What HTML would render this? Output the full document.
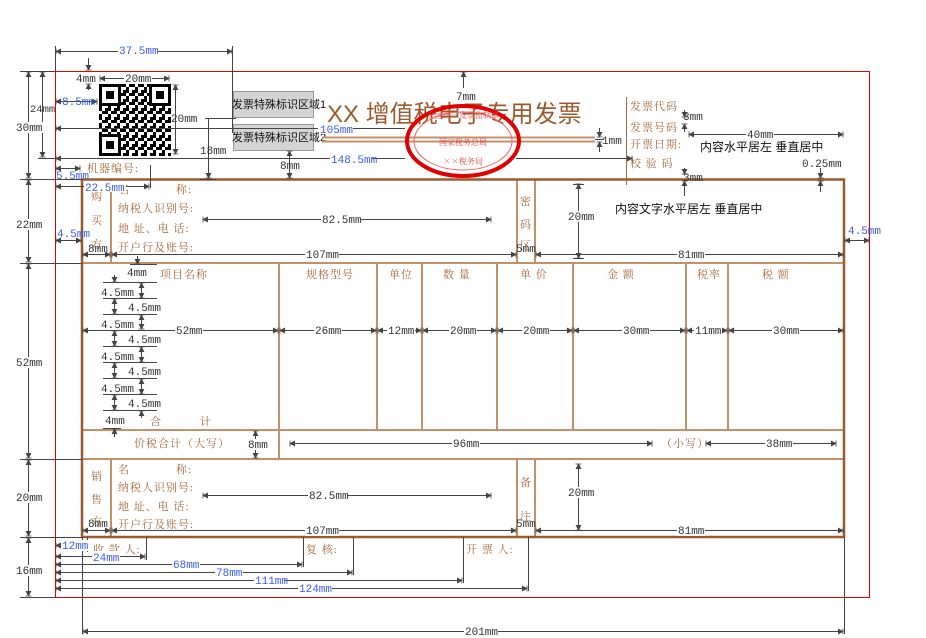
<!DOCTYPE html>
<html><head><meta charset="utf-8">
<style>
html,body{margin:0;padding:0;background:#fff;}
svg{display:block;}
.d{font-family:"Liberation Mono","DejaVu Sans Mono",monospace;font-size:11px;fill:#333;}
.b{font-family:"Liberation Mono","DejaVu Sans Mono",monospace;font-size:11px;fill:#3a5bf0;}
.z{font-family:"Liberation Serif","Noto Serif CJK SC",serif;font-size:11px;fill:#a8693c;letter-spacing:1px;}
.k{font-family:"Liberation Sans","Noto Sans CJK SC",sans-serif;font-size:11px;fill:#111;}
.dl line,.dl path{stroke:#444;stroke-width:1;fill:none;}
</style></head>
<body>
<svg width="926" height="638" viewBox="0 0 926 638" xmlns="http://www.w3.org/2000/svg">
<defs>
<marker id="a" markerWidth="6" markerHeight="6" refX="5" refY="3" orient="auto-start-reverse" markerUnits="userSpaceOnUse"><path d="M0,0.5 L5,3 L0,5.5 Z M5,0 L5,6" fill="#444" stroke="#444" stroke-width="0.8"/></marker>
<pattern id="qr" width="9" height="9" patternUnits="userSpaceOnUse">
<rect x="0" y="0" width="3" height="3" fill="#000"/><rect x="6" y="0" width="3" height="3" fill="#000"/><rect x="3" y="3" width="3" height="3" fill="#000"/><rect x="0" y="6" width="3" height="3" fill="#000"/><rect x="6" y="3" width="3" height="3" fill="#000"/>
</pattern>
</defs>

<!-- QR -->
<rect x="99" y="84" width="72" height="72" fill="url(#qr)"/>
<g fill="#fff"><rect x="99" y="84" width="22" height="22"/><rect x="149" y="84" width="22" height="22"/><rect x="99" y="134" width="22" height="22"/></g>
<g fill="none" stroke="#000" stroke-width="3"><rect x="100.5" y="85.5" width="19" height="19"/><rect x="150.5" y="85.5" width="19" height="19"/><rect x="100.5" y="135.5" width="19" height="19"/></g>
<g fill="#000"><rect x="106" y="91" width="8" height="8"/><rect x="156" y="91" width="8" height="8"/><rect x="106" y="141" width="8" height="8"/></g>

<!-- grey boxes -->
<rect x="233.5" y="91.5" width="80" height="26" fill="#d4d4d4" stroke="#999"/>
<rect x="233.5" y="124.5" width="80" height="26" fill="#d4d4d4" stroke="#999"/>
<text class="k" x="232" y="108">发票特殊标识区域1</text>
<text class="k" x="232" y="141">发票特殊标识区域2</text>

<!-- title -->
<text x="327" y="122" style="font-family:'Liberation Sans','Noto Sans CJK SC',sans-serif;font-size:24px;fill:#9b5a2e;">XX 增值税电子专用发票</text>
<line x1="322" y1="137.5" x2="595" y2="137.5" stroke="#c4906a" stroke-width="2"/>
<line x1="322" y1="141.5" x2="595" y2="141.5" stroke="#c4906a" stroke-width="2"/>
<!-- stamp -->
<ellipse cx="463" cy="141" rx="56" ry="35" fill="none" stroke="#e00000" stroke-width="4"/>
<ellipse cx="463" cy="141" rx="49" ry="29" fill="none" stroke="#e66" stroke-width="1"/>
<text x="463" y="118" text-anchor="middle" style="font-family:'Noto Serif CJK SC',serif;font-size:8px;fill:#d44">全国统一发票监制章</text>
<text x="463" y="145" text-anchor="middle" style="font-family:'Noto Serif CJK SC',serif;font-size:8px;fill:#d44">国家税务总局</text>
<text x="463" y="164" text-anchor="middle" style="font-family:'Noto Serif CJK SC',serif;font-size:8px;fill:#d44">××税务局</text>

<!-- right header labels -->
<line x1="626.5" y1="97" x2="626.5" y2="185" stroke="#a8693c"/>
<text class="z" x="630" y="110">发票代码</text>
<text class="z" x="630" y="131">发票号码</text>
<text class="z" x="630" y="148">开票日期:</text>
<text class="z" x="630" y="167">校 验 码</text>
<text class="k" x="700" y="151" style="font-size:12px">内容水平居左 垂直居中</text>

<!-- main box -->
<g fill="none" stroke="#c4906a" stroke-width="2">
<line x1="82" y1="263" x2="844" y2="263"/>
<line x1="82" y1="430" x2="844" y2="430"/>
<line x1="82" y1="459" x2="844" y2="459"/>
<line x1="111" y1="179" x2="111" y2="263"/>
<line x1="111" y1="459" x2="111" y2="537"/>
<line x1="517" y1="179" x2="517" y2="263"/>
<line x1="535" y1="179" x2="535" y2="263"/>
<line x1="517" y1="459" x2="517" y2="537"/>
<line x1="535" y1="459" x2="535" y2="537"/>
<line x1="279" y1="263" x2="279" y2="459"/>
<line x1="377" y1="263" x2="377" y2="430"/>
<line x1="422" y1="263" x2="422" y2="430"/>
<line x1="497" y1="263" x2="497" y2="430"/>
<line x1="573" y1="263" x2="573" y2="430"/>
<line x1="686" y1="263" x2="686" y2="430"/>
<line x1="728" y1="263" x2="728" y2="430"/>
</g>
<rect x="82" y="179.5" width="762" height="357.5" fill="none" stroke="#9b5a2e" stroke-width="2.5"/>

<!-- buyer -->
<g class="z">
<text x="91" y="200">购</text><text x="91" y="224">买</text><text x="91" y="248">方</text>
<text x="118" y="193">名</text><text x="176" y="193">称:</text>
<text x="118" y="212">纳税人识别号:</text>
<text x="118" y="232">地 址、电 话:</text>
<text x="118" y="251">开户行及账号:</text>
<text x="520" y="205">密</text><text x="520" y="228">码</text><text x="520" y="249">区</text>
<text x="91" y="480">销</text><text x="91" y="503">售</text><text x="91" y="525">方</text>
<text x="118" y="473">名</text><text x="176" y="473">称:</text>
<text x="118" y="491">纳税人识别号:</text>
<text x="118" y="510">地 址、电 话:</text>
<text x="118" y="528">开户行及账号:</text>
<text x="520" y="486">备</text><text x="520" y="520">注</text>
<text x="87" y="172">机器编号:</text>
<text x="160" y="278">项目名称</text>
<text x="306" y="278">规格型号</text>
<text x="389" y="278">单位</text>
<text x="443" y="278">数  量</text>
<text x="520" y="278">单  价</text>
<text x="607" y="278">金  额</text>
<text x="697" y="278">税率</text>
<text x="762" y="278">税  额</text>
<text x="150" y="425">合</text><text x="200" y="425">计</text>
<text x="134" y="447">价税合计（大写）</text>
<text x="661" y="447">（小写）</text>
<text x="93" y="553">收 款 人:</text>
<text x="306" y="553">复 核:</text>
<text x="466" y="553">开 票 人:</text>
</g>
<text class="k" x="615" y="213" style="font-size:12px">内容文字水平居左 垂直居中</text>

<!-- dimension lines -->
<g class="dl">
<line x1="20" y1="71.5" x2="55" y2="71.5"/>
<line x1="20" y1="179.5" x2="82" y2="179.5"/>
<line x1="20" y1="263.5" x2="82" y2="263.5"/>
<line x1="20" y1="459.5" x2="82" y2="459.5"/>
<line x1="20" y1="537.5" x2="82" y2="537.5"/>
<line x1="20" y1="597.5" x2="55" y2="597.5"/>
<line x1="38" y1="158.5" x2="55" y2="158.5"/>
<line x1="28.5" y1="72" x2="28.5" y2="178" marker-start="url(#a)" marker-end="url(#a)"/>
<line x1="42.5" y1="72" x2="42.5" y2="157" marker-start="url(#a)" marker-end="url(#a)"/>
<line x1="28.5" y1="180" x2="28.5" y2="262" marker-start="url(#a)" marker-end="url(#a)"/>
<line x1="28.5" y1="264" x2="28.5" y2="458" marker-start="url(#a)" marker-end="url(#a)"/>
<line x1="28.5" y1="460" x2="28.5" y2="536" marker-start="url(#a)" marker-end="url(#a)"/>
<line x1="28.5" y1="538" x2="28.5" y2="596" marker-start="url(#a)" marker-end="url(#a)"/>
<line x1="55.5" y1="46" x2="55.5" y2="71"/>
<line x1="232.5" y1="46" x2="232.5" y2="133"/>
<line x1="56" y1="51.5" x2="232" y2="51.5" marker-start="url(#a)" marker-end="url(#a)"/>
<line x1="88.5" y1="58" x2="88.5" y2="70" marker-end="url(#a)"/>
<line x1="463.5" y1="88" x2="463.5" y2="72" marker-end="url(#a)"/>
<line x1="100" y1="78.5" x2="169" y2="78.5" marker-start="url(#a)" marker-end="url(#a)"/>
<line x1="88.5" y1="90" x2="88.5" y2="84" marker-end="url(#a)"/>
<line x1="56" y1="101.5" x2="97" y2="101.5" marker-start="url(#a)" marker-end="url(#a)"/>
<line x1="175.5" y1="85" x2="175.5" y2="154" marker-start="url(#a)" marker-end="url(#a)"/>
<line x1="56" y1="128.5" x2="318" y2="128.5" marker-start="url(#a)"/>
<line x1="352" y1="128.5" x2="405" y2="128.5"/>
<line x1="205" y1="118.5" x2="236" y2="118.5"/>
<line x1="208.5" y1="119" x2="208.5" y2="178" marker-end="url(#a)"/>
<line x1="200" y1="179.5" x2="216" y2="179.5"/>
<line x1="289.5" y1="151" x2="289.5" y2="178" marker-start="url(#a)" marker-end="url(#a)"/>
<line x1="56" y1="158.5" x2="330" y2="158.5" marker-start="url(#a)"/>
<line x1="372" y1="158.5" x2="405" y2="158.5"/>
<line x1="516" y1="158.5" x2="632" y2="158.5" marker-end="url(#a)"/>
<line x1="599.5" y1="128" x2="599.5" y2="137" marker-end="url(#a)"/>
<line x1="599.5" y1="152" x2="599.5" y2="142" marker-end="url(#a)"/>
<line x1="595" y1="139.5" x2="604" y2="139.5"/>
<line x1="684.5" y1="110" x2="684.5" y2="117" marker-end="url(#a)"/>
<line x1="684.5" y1="132" x2="684.5" y2="124" marker-end="url(#a)"/>
<line x1="684.5" y1="168" x2="684.5" y2="174" marker-end="url(#a)"/>
<line x1="684.5" y1="196" x2="684.5" y2="181" marker-end="url(#a)"/>
<line x1="689" y1="134.5" x2="843" y2="134.5" marker-start="url(#a)" marker-end="url(#a)"/>
<line x1="820.5" y1="168" x2="820.5" y2="178" marker-end="url(#a)"/>
<line x1="820.5" y1="192" x2="820.5" y2="181" marker-end="url(#a)"/>
<line x1="56" y1="168.5" x2="80" y2="168.5" marker-start="url(#a)" marker-end="url(#a)"/>
<line x1="56" y1="186.5" x2="149" y2="186.5" marker-start="url(#a)" marker-end="url(#a)"/>
<line x1="150.5" y1="165" x2="150.5" y2="188"/>
<line x1="56" y1="240.5" x2="81" y2="240.5" marker-start="url(#a)" marker-end="url(#a)"/>
<line x1="845" y1="240.5" x2="869" y2="240.5" marker-start="url(#a)" marker-end="url(#a)"/>
<line x1="203" y1="219.5" x2="491" y2="219.5" marker-start="url(#a)" marker-end="url(#a)"/>
<line x1="83" y1="254.5" x2="110" y2="254.5" marker-start="url(#a)" marker-end="url(#a)"/>
<line x1="112" y1="254.5" x2="516" y2="254.5" marker-start="url(#a)" marker-end="url(#a)"/>
<line x1="536" y1="254.5" x2="843" y2="254.5" marker-start="url(#a)" marker-end="url(#a)"/>
<line x1="578.5" y1="184" x2="578.5" y2="258" marker-start="url(#a)" marker-end="url(#a)"/>
<line x1="573" y1="184.5" x2="584" y2="184.5"/><line x1="573" y1="258.5" x2="584" y2="258.5"/>
<line x1="137.5" y1="256" x2="137.5" y2="264" marker-end="url(#a)"/>
<line x1="130" y1="264.5" x2="157" y2="264.5"/>
<line x1="103" y1="282.5" x2="157" y2="282.5"/><line x1="103" y1="298.5" x2="157" y2="298.5"/>
<line x1="103" y1="314.5" x2="157" y2="314.5"/><line x1="103" y1="346.5" x2="157" y2="346.5"/>
<line x1="103" y1="362.5" x2="157" y2="362.5"/><line x1="103" y1="378.5" x2="157" y2="378.5"/>
<line x1="103" y1="394.5" x2="157" y2="394.5"/><line x1="103" y1="410.5" x2="157" y2="410.5"/>
<line x1="114.5" y1="275" x2="114.5" y2="282" marker-end="url(#a)"/>
<line x1="114.5" y1="299" x2="114.5" y2="314" marker-start="url(#a)" marker-end="url(#a)"/>
<line x1="114.5" y1="331" x2="114.5" y2="346" marker-start="url(#a)" marker-end="url(#a)"/>
<line x1="114.5" y1="363" x2="114.5" y2="378" marker-start="url(#a)" marker-end="url(#a)"/>
<line x1="114.5" y1="395" x2="114.5" y2="410" marker-start="url(#a)" marker-end="url(#a)"/>
<line x1="141.5" y1="283" x2="141.5" y2="298" marker-start="url(#a)" marker-end="url(#a)"/>
<line x1="141.5" y1="315" x2="141.5" y2="329" marker-start="url(#a)" marker-end="url(#a)"/>
<line x1="141.5" y1="347" x2="141.5" y2="362" marker-start="url(#a)" marker-end="url(#a)"/>
<line x1="141.5" y1="379" x2="141.5" y2="394" marker-start="url(#a)" marker-end="url(#a)"/>
<line x1="141.5" y1="418" x2="141.5" y2="411" marker-end="url(#a)"/>
<line x1="103" y1="428.5" x2="121" y2="428.5"/>
<line x1="114.5" y1="437" x2="114.5" y2="429" marker-end="url(#a)"/>
<line x1="83" y1="330.5" x2="278" y2="330.5" marker-start="url(#a)" marker-end="url(#a)"/>
<line x1="280" y1="330.5" x2="376" y2="330.5" marker-start="url(#a)" marker-end="url(#a)"/>
<line x1="378" y1="330.5" x2="421" y2="330.5" marker-start="url(#a)" marker-end="url(#a)"/>
<line x1="423" y1="330.5" x2="496" y2="330.5" marker-start="url(#a)" marker-end="url(#a)"/>
<line x1="498" y1="330.5" x2="572" y2="330.5" marker-start="url(#a)" marker-end="url(#a)"/>
<line x1="574" y1="330.5" x2="685" y2="330.5" marker-start="url(#a)" marker-end="url(#a)"/>
<line x1="687" y1="330.5" x2="727" y2="330.5" marker-start="url(#a)" marker-end="url(#a)"/>
<line x1="729" y1="330.5" x2="843" y2="330.5" marker-start="url(#a)" marker-end="url(#a)"/>
<line x1="255.5" y1="431" x2="255.5" y2="458" marker-start="url(#a)" marker-end="url(#a)"/>
<line x1="290" y1="443.5" x2="652" y2="443.5" marker-start="url(#a)" marker-end="url(#a)"/>
<line x1="706" y1="443.5" x2="836" y2="443.5" marker-start="url(#a)" marker-end="url(#a)"/>
<line x1="203" y1="495.5" x2="491" y2="495.5" marker-start="url(#a)" marker-end="url(#a)"/>
<line x1="83" y1="530.5" x2="110" y2="530.5" marker-start="url(#a)" marker-end="url(#a)"/>
<line x1="112" y1="530.5" x2="516" y2="530.5" marker-start="url(#a)" marker-end="url(#a)"/>
<line x1="536" y1="530.5" x2="843" y2="530.5" marker-start="url(#a)" marker-end="url(#a)"/>
<line x1="578.5" y1="464" x2="578.5" y2="530" marker-start="url(#a)" marker-end="url(#a)"/>
<line x1="82.5" y1="537" x2="82.5" y2="634"/>
<line x1="844.5" y1="537" x2="844.5" y2="634"/>
<line x1="83" y1="631.5" x2="843" y2="631.5" marker-start="url(#a)" marker-end="url(#a)"/>
<line x1="87.5" y1="537" x2="87.5" y2="552"/>
<line x1="146.5" y1="537" x2="146.5" y2="560"/>
<line x1="303.5" y1="537" x2="303.5" y2="567"/>
<line x1="353.5" y1="537" x2="353.5" y2="575"/>
<line x1="463.5" y1="537" x2="463.5" y2="583"/>
<line x1="528.5" y1="537" x2="528.5" y2="591"/>
<line x1="56" y1="545.5" x2="86" y2="545.5" marker-start="url(#a)" marker-end="url(#a)"/>
<line x1="56" y1="556.5" x2="145" y2="556.5" marker-start="url(#a)" marker-end="url(#a)"/>
<line x1="56" y1="564.5" x2="302" y2="564.5" marker-start="url(#a)" marker-end="url(#a)"/>
<line x1="56" y1="572.5" x2="352" y2="572.5" marker-start="url(#a)" marker-end="url(#a)"/>
<line x1="56" y1="580.5" x2="462" y2="580.5" marker-start="url(#a)" marker-end="url(#a)"/>
<line x1="56" y1="588.5" x2="527" y2="588.5" marker-start="url(#a)" marker-end="url(#a)"/>
</g>

<!-- red outer (on top) -->
<rect x="55.5" y="71.5" width="814" height="526" fill="none" stroke="#e00000" stroke-width="1"/>

<g>
<g class="b">
<rect x="118" y="45" width="40" height="11" fill="#fff"/><text x="119" y="54">37.5mm</text>
<text x="62" y="105">8.5mm</text>
<rect x="319" y="123" width="34" height="11" fill="#fff"/><text x="320" y="133">105mm</text>
<rect x="330" y="153" width="42" height="11" fill="#fff"/><text x="331" y="163">148.5mm</text>
<text x="56" y="179">5.5mm</text>
<rect x="84" y="181" width="42" height="11" fill="#fff"/><text x="85" y="191">22.5mm</text>
<text x="57" y="237">4.5mm</text>
<text x="848" y="234">4.5mm</text>
<rect x="61" y="540" width="28" height="11" fill="#fff"/><text x="62" y="549">12mm</text>
<rect x="92" y="551" width="28" height="11" fill="#fff"/><text x="93" y="561">24mm</text>
<rect x="172" y="559" width="28" height="11" fill="#fff"/><text x="173" y="568">68mm</text>
<rect x="215" y="567" width="28" height="11" fill="#fff"/><text x="216" y="576">78mm</text>
<rect x="254" y="575" width="30" height="11" fill="#fff"/><text x="255" y="584">111mm</text>
<rect x="298" y="583" width="34" height="11" fill="#fff"/><text x="299" y="592">124mm</text>
</g>
<g class="d">
<text x="76" y="82">4mm</text>
<rect x="124" y="73" width="28" height="11" fill="#fff"/><text x="125" y="82">20mm</text>
<text x="456" y="100">7mm</text>
<text x="30" y="112" style="font-size:10.5px">24mm</text>
<rect x="15" y="122" width="28" height="11" fill="#fff"/><text x="16" y="131">30mm</text>
<text x="171" y="122">20mm</text>
<text x="200" y="154">18mm</text>
<text x="280" y="169">8mm</text>
<text x="602" y="144">1mm</text>
<text x="683" y="120">3mm</text>
<text x="683" y="181">3mm</text>
<rect x="746" y="129" width="28" height="11" fill="#fff"/><text x="747" y="138">40mm</text>
<text x="802" y="167">0.25mm</text>
<rect x="15" y="219" width="28" height="11" fill="#fff"/><text x="16" y="228">22mm</text>
<rect x="321" y="214" width="40" height="11" fill="#fff"/><text x="322" y="223">82.5mm</text>
<text x="88" y="252">8mm</text>
<rect x="305" y="249" width="34" height="11" fill="#fff"/><text x="306" y="258">107mm</text>
<text x="516" y="252">5mm</text>
<rect x="567" y="211" width="28" height="11" fill="#fff"/><text x="568" y="220">20mm</text>
<rect x="677" y="249" width="28" height="11" fill="#fff"/><text x="678" y="258">81mm</text>
<text x="127" y="276">4mm</text>
<text x="101" y="296">4.5mm</text><text x="128" y="311">4.5mm</text>
<text x="101" y="328">4.5mm</text><text x="128" y="343">4.5mm</text>
<text x="101" y="360">4.5mm</text><text x="128" y="375">4.5mm</text>
<text x="101" y="392">4.5mm</text><text x="128" y="407">4.5mm</text>
<text x="105" y="424">4mm</text>
<rect x="15" y="357" width="28" height="11" fill="#fff"/><text x="16" y="366">52mm</text>
<rect x="175" y="325" width="28" height="11" fill="#fff"/><text x="176" y="334">52mm</text>
<rect x="314" y="325" width="28" height="11" fill="#fff"/><text x="315" y="334">26mm</text>
<rect x="387" y="325" width="28" height="11" fill="#fff"/><text x="388" y="334">12mm</text>
<rect x="449" y="325" width="28" height="11" fill="#fff"/><text x="450" y="334">20mm</text>
<rect x="522" y="325" width="28" height="11" fill="#fff"/><text x="523" y="334">20mm</text>
<rect x="622" y="325" width="28" height="11" fill="#fff"/><text x="623" y="334">30mm</text>
<rect x="694" y="325" width="28" height="11" fill="#fff"/><text x="695" y="334">11mm</text>
<rect x="772" y="325" width="28" height="11" fill="#fff"/><text x="773" y="334">30mm</text>
<rect x="247" y="439" width="20" height="11" fill="#fff"/><text x="248" y="448">8mm</text>
<rect x="452" y="438" width="28" height="11" fill="#fff"/><text x="453" y="447">96mm</text>
<rect x="765" y="438" width="28" height="11" fill="#fff"/><text x="766" y="447">38mm</text>
<rect x="15" y="492" width="28" height="11" fill="#fff"/><text x="16" y="501">20mm</text>
<rect x="308" y="490" width="40" height="11" fill="#fff"/><text x="309" y="499">82.5mm</text>
<text x="88" y="527">8mm</text>
<rect x="305" y="525" width="34" height="11" fill="#fff"/><text x="306" y="534">107mm</text>
<text x="516" y="527">5mm</text>
<rect x="567" y="487" width="28" height="11" fill="#fff"/><text x="568" y="496">20mm</text>
<rect x="677" y="525" width="28" height="11" fill="#fff"/><text x="678" y="534">81mm</text>
<rect x="15" y="565" width="28" height="11" fill="#fff"/><text x="16" y="574">16mm</text>
<rect x="464" y="626" width="34" height="11" fill="#fff"/><text x="465" y="635">201mm</text>
</g>
</g>
</svg>
</body></html>
